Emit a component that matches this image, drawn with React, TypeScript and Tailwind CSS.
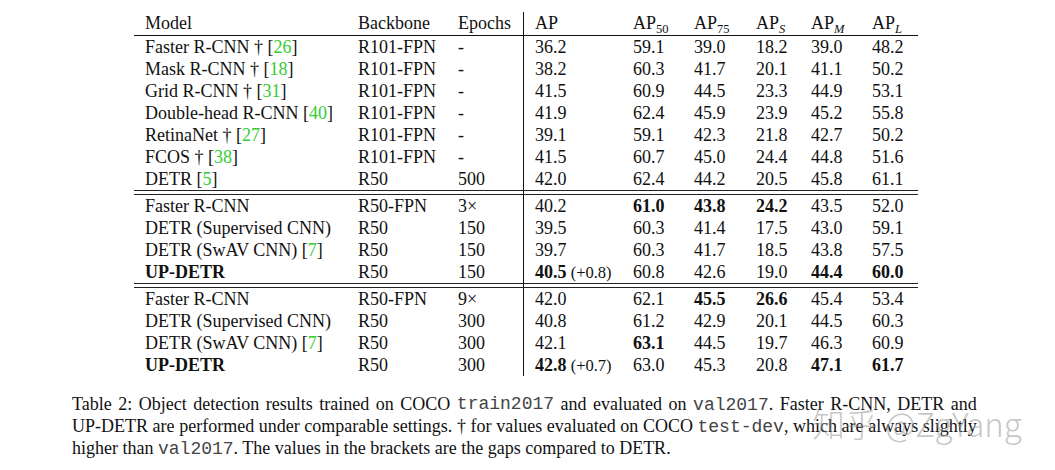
import React from "react";

const G = ({ n }: { n: string }) => (
  <span>
    [<span className="text-[#33cc33]">{n}</span>]
  </span>
);
const B = ({ children }: { children: React.ReactNode }) => (
  <span className="font-bold">{children}</span>
);
const Gap = ({ v }: { v: string }) => <span className="text-[16.5px]"> ({v})</span>;

type Row = React.ReactNode[];

const sec1: Row[] = [
  [<>Faster R-CNN † <G n="26" /></>, "R101-FPN", "-", "36.2", "59.1", "39.0", "18.2", "39.0", "48.2"],
  [<>Mask R-CNN † <G n="18" /></>, "R101-FPN", "-", "38.2", "60.3", "41.7", "20.1", "41.1", "50.2"],
  [<>Grid R-CNN † <G n="31" /></>, "R101-FPN", "-", "41.5", "60.9", "44.5", "23.3", "44.9", "53.1"],
  [<>Double-head R-CNN <G n="40" /></>, "R101-FPN", "-", "41.9", "62.4", "45.9", "23.9", "45.2", "55.8"],
  [<>RetinaNet † <G n="27" /></>, "R101-FPN", "-", "39.1", "59.1", "42.3", "21.8", "42.7", "50.2"],
  [<>FCOS † <G n="38" /></>, "R101-FPN", "-", "41.5", "60.7", "45.0", "24.4", "44.8", "51.6"],
  [<>DETR <G n="5" /></>, "R50", "500", "42.0", "62.4", "44.2", "20.5", "45.8", "61.1"],
];

const sec2: Row[] = [
  ["Faster R-CNN", "R50-FPN", "3×", "40.2", <B>61.0</B>, <B>43.8</B>, <B>24.2</B>, "43.5", "52.0"],
  ["DETR (Supervised CNN)", "R50", "150", "39.5", "60.3", "41.4", "17.5", "43.0", "59.1"],
  [<>DETR (SwAV CNN) <G n="7" /></>, "R50", "150", "39.7", "60.3", "41.7", "18.5", "43.8", "57.5"],
  [<B>UP-DETR</B>, "R50", "150", <><B>40.5</B><Gap v="+0.8" /></>, "60.8", "42.6", "19.0", <B>44.4</B>, <B>60.0</B>],
];

const sec3: Row[] = [
  ["Faster R-CNN", "R50-FPN", "9×", "42.0", "62.1", <B>45.5</B>, <B>26.6</B>, "45.4", "53.4"],
  ["DETR (Supervised CNN)", "R50", "300", "40.8", "61.2", "42.9", "20.1", "44.5", "60.3"],
  [<>DETR (SwAV CNN) <G n="7" /></>, "R50", "300", "42.1", <B>63.1</B>, "44.5", "19.7", "46.3", "60.9"],
  [<B>UP-DETR</B>, "R50", "300", <><B>42.8</B><Gap v="+0.7" /></>, "63.0", "45.3", "20.8", <B>47.1</B>, <B>61.7</B>],
];

const Sub = ({ children, it }: { children: React.ReactNode; it?: boolean }) => (
  <span className={"relative top-[4px] text-[12.5px] " + (it ? "italic" : "")}>{children}</span>
);

const header: Row = [
  "Model",
  "Backbone",
  "Epochs",
  "AP",
  <>AP<Sub>50</Sub></>,
  <>AP<Sub>75</Sub></>,
  <>AP<Sub it>S</Sub></>,
  <>AP<Sub it>M</Sub></>,
  <>AP<Sub it>L</Sub></>,
];

const GRID = "grid grid-cols-[224px_100px_65px_110px_61px_62px_55px_61px_46px]";

function Cells({ row, h }: { row: Row; h: string }) {
  return (
    <>
      {row.map((c, i) => (
        <div
          key={i}
          className={
            "whitespace-nowrap " +
            h +
            " " +
            (i === 0 ? "pl-[11px]" : "") +
            (i === 3 ? "border-l border-[#111] pl-[11px]" : "")
          }
        >
          {c}
        </div>
      ))}
    </>
  );
}

function Section({ rows }: { rows: Row[] }) {
  return (
    <div className={GRID}>
      {rows.map((r, i) => (
        <Cells key={i} row={r} h="h-[22px]" />
      ))}
    </div>
  );
}

const DoubleRule = () => (
  <div className="flex flex-col">
    <div className="h-px bg-[#222]" />
    <div className={GRID + " h-[3px]"}>
      <div />
      <div />
      <div />
      <div className="border-l border-[#111]" />
    </div>
    <div className="h-px bg-[#222]" />
  </div>
);

const Mono = ({ children }: { children: React.ReactNode }) => (
  <span className="font-['Liberation_Mono',monospace] text-[#444]">{children}</span>
);

export default function App() {
  return (
    <div className="relative w-[1055px] h-[470px] overflow-hidden bg-white text-[#111] font-['Liberation_Serif',serif] text-[18px] leading-[22px]">
      <div className="ml-[134px] w-[784px] pt-[12px]">
        <div className={GRID}>
          <Cells row={header} h="h-[23px]" />
        </div>
        <div className="h-px bg-[#111]" />
        <Section rows={sec1} />
        <DoubleRule />
        <Section rows={sec2} />
        <DoubleRule />
        <Section rows={sec3} />
      </div>
      <div className="ml-[72px] mt-[18px] w-[905px] leading-[21px]">
        <div className="whitespace-nowrap flex justify-between">
          <span>Table</span><span>2:</span><span>Object</span><span>detection</span><span>results</span><span>trained</span><span>on</span><span>COCO</span><Mono>train2017</Mono><span>and</span><span>evaluated</span><span>on</span><span><Mono>val2017</Mono>.</span><span>Faster</span><span>R-CNN,</span><span>DETR</span><span>and</span>
        </div>
        <div className="whitespace-nowrap flex justify-between">
          <span>UP-DETR</span><span>are</span><span>performed</span><span>under</span><span>comparable</span><span>settings.</span><span>†</span><span>for</span><span>values</span><span>evaluated</span><span>on</span><span>COCO</span><span><Mono>test-dev</Mono>,</span><span>which</span><span>are</span><span>always</span><span>slightly</span>
        </div>
        <div className="whitespace-nowrap">
          higher than <Mono>val2017</Mono>. The values in the brackets are the gaps compared to DETR.
        </div>
      </div>
      <div className="absolute left-[812px] top-[402px] text-[33px] leading-[42px] text-[rgba(150,150,150,0.55)] font-['Noto_Sans_CJK_SC','Noto_Sans',sans-serif] font-light whitespace-nowrap">
        知乎 @ZgYang
      </div>
    </div>
  );
}
